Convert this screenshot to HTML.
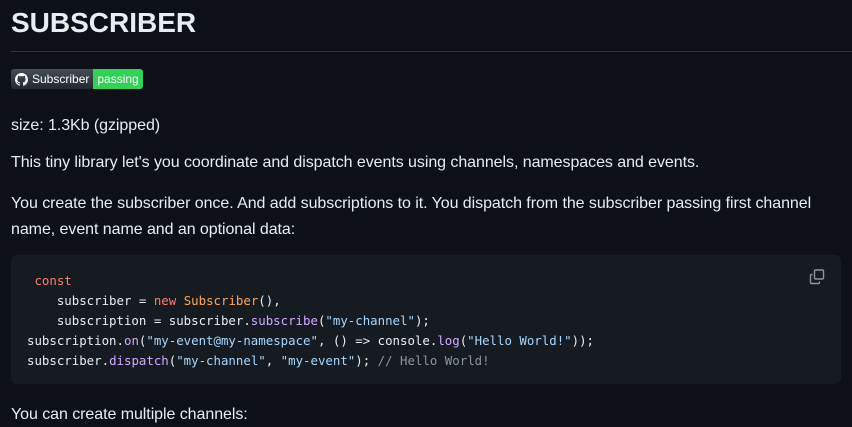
<!DOCTYPE html>
<html><head><style>
body{margin:0;background:#0d1117;color:#e6edf3;font-family:"Liberation Sans",sans-serif;width:852px;height:426px;overflow:hidden;position:relative}
.a{position:absolute;white-space:nowrap}
p{position:absolute;left:11px;margin:0;font-size:16px;line-height:24px;white-space:nowrap;letter-spacing:-0.06px}
h1{position:absolute;left:11px;top:3px;margin:0;font-size:28px;font-weight:600;line-height:40px}
.hr{position:absolute;left:11px;right:0;top:51px;height:1px;background:#30363d}
.badge{position:absolute;left:11px;top:69px;height:20px;display:flex;font-size:12px;border-radius:3px;overflow:hidden}
.badge .l{background:linear-gradient(#444d56,#24292e);color:#fff;padding:0 4px 0 4px;display:flex;align-items:center;gap:4px}
.badge .r{background:#34d058;color:#fff;padding:0 4px;display:flex;align-items:center}
.code{position:absolute;left:11px;top:255px;width:830px;height:129px;background:#161b22;border-radius:6px}
pre{position:absolute;left:27px;top:271px;margin:0;font-family:"DejaVu Sans Mono",monospace;font-size:12.4px;line-height:20px;color:#e6edf3}
.k{color:#ff7b72}.c{color:#ffa657}.f{color:#d2a8ff}.s{color:#a5d6ff}.m{color:#8b949e}
</style></head><body>
<h1>SUBSCRIBER</h1>
<div class="hr"></div>
<div class="badge"><span class="l"><svg width="13" height="13" viewBox="0 0 16 16"><path fill="#fff" d="M8 0C3.58 0 0 3.58 0 8c0 3.540 2.29 6.53 5.47 7.59.4.07.55-.17.55-.38v-1.33c-2.230.48-2.7-1.07-2.7-1.07-.36-.93-.89-1.17-.89-1.17-.73-.5.05-.49.05-.49.8.06 1.23.83 1.23.83.71 1.22 1.87.87 2.33.66.07-.52.28-.87.5-1.07-1.78-.2-3.64-.89-3.64-3.95 0-.87.31-1.59.82-2.15-.08-.2-.36-1.020.08-2.12 0 0 .67-.21 2.2.82a7.6 7.6 0 014 0c1.53-1.04 2.2-.82 2.2-.82.44 1.1.16 1.920.08 2.12.51.56.82 1.27.82 2.15 0 3.07-1.87 3.75-3.65 3.95.29.25.54.73.54 1.48v2.2c0 .21.15.46.55.38A8 8 0 0016 8c0-4.42-3.58-8-8-8z"/></svg>Subscriber</span><span class="r">passing</span></div>
<p style="top:114px">size: 1.3Kb (gzipped)</p>
<p style="top:151px">This tiny library let's you coordinate and dispatch events using channels, namespaces and events.</p>
<p style="top:192px">You create the subscriber once. And add subscriptions to it. You dispatch from the subscriber passing first channel</p>
<p style="top:218px">name, event name and an optional data:</p>
<div class="code"></div>
<svg class="a" style="left:809px;top:269px" width="16" height="16" viewBox="0 0 16 16" fill="none" stroke="#8b949e" stroke-width="1.4"><rect x="5.5" y="1" width="9" height="9" rx="1.2"/><path d="M3.5 5.5h-1a1 1 0 00-1 1v7a1 1 0 001 1h7a1 1 0 001-1v-1"/></svg>
<pre> <span class="k">const</span>
    subscriber = <span class="k">new</span> <span class="c">Subscriber</span>(),
    subscription = subscriber.<span class="f">subscribe</span>(<span class="s">"my-channel"</span>);
subscription.<span class="f">on</span>(<span class="s">"my-event@my-namespace"</span>, () =&gt; console.<span class="f">log</span>(<span class="s">"Hello World!"</span>));
subscriber.<span class="f">dispatch</span>(<span class="s">"my-channel"</span>, <span class="s">"my-event"</span>); <span class="m">// Hello World!</span></pre>
<p style="top:403px">You can create multiple channels:</p>
</body></html>
